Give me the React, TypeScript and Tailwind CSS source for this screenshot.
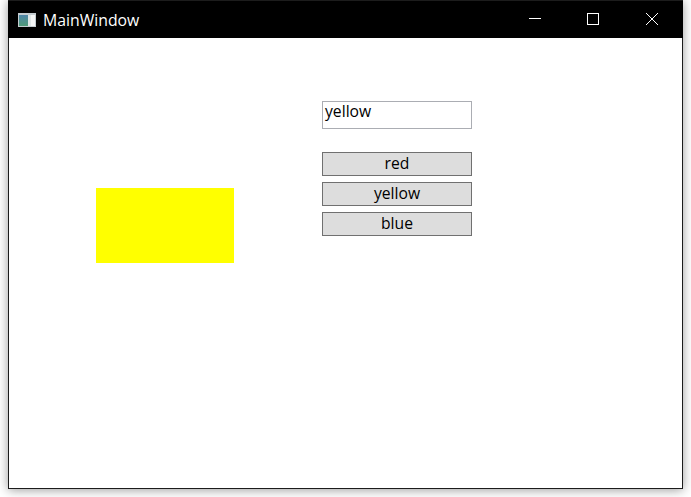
const BUTTONS = ["red", "yellow", "blue"];

function AppIcon() {
  return (
    <svg width="18" height="14" viewBox="0 0 18 14" className="block">
      <defs>
        <linearGradient id="pane" x1="0" y1="0" x2="0" y2="1">
          <stop offset="0" stopColor="#4f86a8" />
          <stop offset="1" stopColor="#4f9a78" />
        </linearGradient>
      </defs>
      <rect x="0" y="0" width="18" height="14" fill="#c4ccd0" />
      <rect x="1" y="2" width="9" height="11" fill="url(#pane)" />
      <rect x="10" y="2" width="3" height="11" fill="#dfe6e6" />
      <rect x="13" y="2" width="4" height="11" fill="#f4f6f6" />
    </svg>
  );
}

function WindowButtons() {
  return (
    <div className="flex h-full items-center pb-[1px]">
      <div className="flex w-[59px] justify-center pl-[2px]">
        <svg width="12" height="12" viewBox="0 0 12 12" className="block">
          <path d="M0 5.5H12" stroke="#fff" strokeWidth="1" />
        </svg>
      </div>
      <div className="flex w-[59px] justify-center">
        <svg width="12" height="12" viewBox="0 0 12 12" className="block">
          <rect x="0.5" y="0.5" width="11" height="11" fill="none" stroke="#fff" strokeWidth="1" />
        </svg>
      </div>
      <div className="flex w-[59px] justify-center">
        <svg width="12" height="12" viewBox="0 0 12 12" className="block">
          <path d="M0 0L12 12M12 0L0 12" stroke="#fff" strokeWidth="1" />
        </svg>
      </div>
    </div>
  );
}

export default function App() {
  return (
    <div className="h-[497px] w-[691px] overflow-hidden bg-white pl-2 font-['Open_Sans','Noto_Sans',sans-serif]">
      <div className="flex h-[489px] w-[675px] flex-col bg-white shadow-[0_1px_10px_rgba(0,0,0,0.4)]">
        <div className="flex h-[38px] shrink-0 items-center justify-between border-t border-[#1c1c1c] bg-black pl-[10px] pr-[2px]">
          <div className="flex items-center gap-[7px]">
            <AppIcon />
            <span className="text-[15.8px] leading-5 text-white">MainWindow</span>
          </div>
          <WindowButtons />
        </div>
        <div className="flex min-h-0 flex-1 items-start border-x border-b border-[#1c1c1c] pl-[87px]">
          <div className="mt-[150px] h-[75px] w-[138px] bg-[#ffff00]" />
          <div className="ml-[88px] mt-[63px] flex w-[150px] flex-col">
            <div className="h-7 border border-[#abadb3] px-[2px] text-[15.7px] leading-[19px] text-black">yellow</div>
            <div className="mt-[23px] flex flex-col gap-1.5">
              {BUTTONS.map((b) => (
                <button
                  key={b}
                  className="h-6 border border-[#707070] bg-[#dddddd] pb-[2px] text-center text-[15.7px] leading-[20px] text-black"
                >
                  {b}
                </button>
              ))}
            </div>
          </div>
        </div>
      </div>
    </div>
  );
}
